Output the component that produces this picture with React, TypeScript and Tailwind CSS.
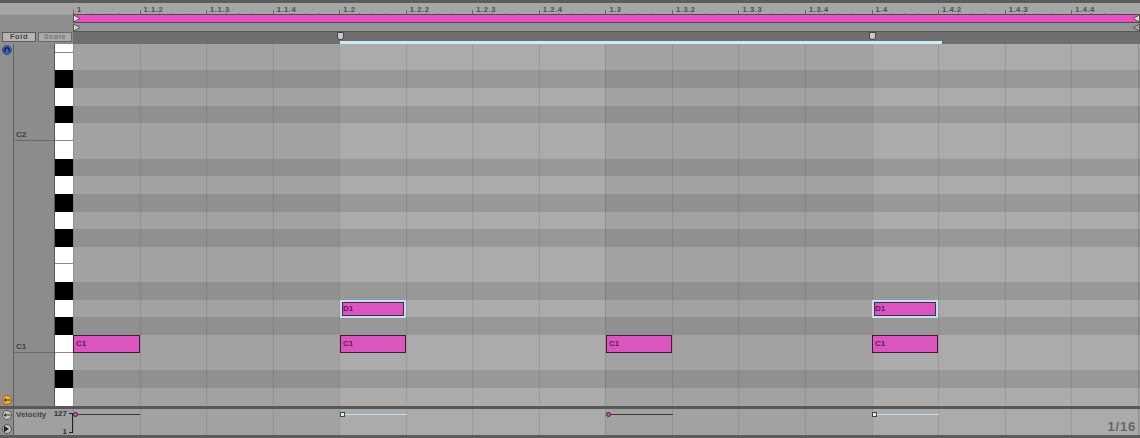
import React from 'react';

// row 0 is the cut off F2 at the top, then downwards to A0
const rows = ['w', 'w', 'b', 'w', 'b', 'w', 'w', 'b', 'w', 'b', 'w', 'b', 'w', 'w', 'b', 'w', 'b', 'w', 'w', 'b', 'w'];
const cols = Array.from({ length: 17 }, (_, i) => i);
const labels = ['1', '1.1.2', '1.1.3', '1.1.4', '1.2', '1.2.2', '1.2.3', '1.2.4', '1.3', '1.3.2', '1.3.3', '1.3.4', '1.4', '1.4.2', '1.4.3', '1.4.4'];

const notes = [
  { name: 'C1', left: 0, top: 291, w: 67, sel: false },
  { name: 'D1', left: 267, top: 256, w: 66, sel: true },
  { name: 'C1', left: 267, top: 291, w: 66, sel: false },
  { name: 'C1', left: 533, top: 291, w: 66, sel: false },
  { name: 'D1', left: 799, top: 256, w: 66, sel: true },
  { name: 'C1', left: 799, top: 291, w: 66, sel: false },
];

const velocity = [
  { left: 0, sel: false },
  { left: 267, sel: true },
  { left: 533, sel: false },
  { left: 799, sel: true },
];

const Note = ({ name, left, top, w, sel }: { name: string; left: number; top: number; w: number; sel: boolean }) => (
  <div
    className={`absolute h-[18px] flex items-center bg-[#db55be] text-[8px] font-bold text-[#5c1c50] ${sel ? 'pl-[1px] border-2 border-[#c3e2ef] outline outline-1 -outline-offset-3 outline-[#4a2a48]' : 'pl-[2px] border border-[#3a1c36]'}`}
    style={{ left, top, width: w }}
  >
    {name}
  </div>
);

const GridLines = () => (
  <div className="absolute inset-0 grid grid-cols-[repeat(17,66.56px)] overflow-hidden pointer-events-none">
    {cols.map(i => (
      <div
        key={i}
        className={`border-l border-black/10 ${Math.floor(i / 4) % 2 === 0 ? 'bg-black/5' : ''}`}
      />
    ))}
  </div>
);

export default function App() {
  return (
    <div className="w-[1140px] h-[438px] flex flex-col overflow-hidden bg-[#8c8c8c] text-[#3c3c3c]" style={{ fontFamily: '"Liberation Sans", Arial, sans-serif' }}>
      <div className="h-[3px] bg-[#5c5c5c] shrink-0" />

      {/* header: ruler, clip bar, loop bar */}
      <div className="h-[41px] flex shrink-0">
        <div className="w-[73px] shrink-0 flex flex-col bg-[#8d8d8d]">
          <div className="h-[12px] bg-[#a6a6a6]" />
          <div className="flex gap-[2px] pl-[2px] pt-[17px]">
            <div className="w-[34px] h-[10px] border border-[#5a5a5a] bg-[#b5b5b5] text-[7.5px] font-bold leading-[8px] text-center tracking-[0.6px] text-[#444]">Fold</div>
            <div className="w-[34px] h-[10px] border border-[#6a6a6a] bg-[#ababab] text-[7.5px] font-bold leading-[8px] text-center tracking-[0.6px] text-[#777]">Scale</div>
          </div>
        </div>
        <div className="flex-1 flex flex-col relative">
          <div className="h-[11px] bg-[#a6a6a6] grid grid-cols-[repeat(16,66.56px)]">
            {labels.map(l => (
              <div key={l} className="relative flex justify-around items-end">
                <div className="absolute left-0 bottom-0 h-[4px] w-[1px] bg-[#666]" />
                <span className="absolute left-[4px] top-[2px] text-[7.5px] leading-[9px] font-bold tracking-[0.6px] text-[#4a4a4a]">{l}</span>
                <div className="w-[1px]" />
                <div className="w-[1px] h-[1px] bg-[#777]" />
                <div className="w-[1px] h-[1px] bg-[#777]" />
                <div className="w-[1px] h-[1px] bg-[#777]" />
                <div className="w-[1px]" />
              </div>
            ))}
          </div>
          <div className="h-[9px] bg-[#ea4fc6] border-b border-t border-[#4c4c4c]" />
          <div className="h-[9px] bg-[#959595] border-b border-[#565656]" />
          <div className="flex-1 bg-[#6f6f6f] relative">
            <div className="absolute left-[267px] top-[9px] w-[602px] h-[2.5px] bg-[#cfe9f6]" />
            <div className="absolute left-[264px] top-0 w-[7px] h-[8px] bg-[#c9c9c9] border border-[#444] rounded-b-[3px]" />
            <div className="absolute left-[796px] top-0 w-[7px] h-[8px] bg-[#c9c9c9] border border-[#444] rounded-b-[3px]" />
          </div>
          {/* start and end flags */}
          <svg className="absolute left-0 top-[11px]" width="8" height="18" viewBox="0 0 8 18">
            <path d="M0.5 1 L7 4.5 L0.5 8 Z" fill="#dcdcdc" stroke="#555" />
            <path d="M0.5 10 L7 13.5 L0.5 17 Z" fill="#d4d4d4" stroke="#555" />
          </svg>
          <svg className="absolute right-0 top-[11px]" width="8" height="18" viewBox="0 0 8 18">
            <path d="M7.5 1 L1 4.5 L7.5 8 Z" fill="#dcdcdc" stroke="#555" />
            <path d="M7.5 10 L1 13.5 L7.5 17 Z" fill="#a8a8a8" stroke="#555" />
          </svg>
        </div>
      </div>

      {/* note editor */}
      <div className="h-[362px] flex shrink-0">
        <div className="w-[14px] shrink-0 flex flex-col justify-between items-center bg-[#8f8f8f] border-r border-[#5f5f5f] pt-[1px] pb-[1px]">
          <div className="w-[10px] h-[10px] rounded-full bg-[#3d63c6] border border-[#3a4a7c] flex items-center justify-center">
            <svg width="6" height="6" viewBox="0 0 6 6"><path d="M0.8 5 V3 A2.2 2.2 0 0 1 5.2 3 V5" fill="none" stroke="#16224e" strokeWidth="1.4" /></svg>
          </div>
          <div className="w-[10px] h-[10px] rounded-full bg-[#f2b032] border border-[#8f6a1d] flex items-center justify-center">
            <svg width="8" height="6" viewBox="0 0 8 6"><path d="M0.5 3 L3 1 V2.5 H7.5 V3.5 H3 V5 Z" fill="#4a3510" /></svg>
          </div>
        </div>
        <div className="w-[41px] shrink-0 relative bg-[#8c8c8c] border-r border-[#555]">
          <div className="absolute left-0 right-0 top-[96px] border-b border-[#6a6a6a] h-[1px]" />
          <div className="absolute left-0 right-0 top-[308px] border-b border-[#6a6a6a] h-[1px]" />
          <span className="absolute left-[2px] top-[86px] text-[8px] leading-[10px] font-bold text-[#3f3f3f]">C2</span>
          <span className="absolute left-[2px] top-[298px] text-[8px] leading-[10px] font-bold text-[#3f3f3f]">C1</span>
        </div>
        <div className="w-[18px] shrink-0 grid grid-rows-[8.6px_repeat(20,17.67px)]">
          {rows.map((r, i) => (
            <div key={i} className={r === 'b' ? 'bg-black' : `bg-white ${rows[i + 1] === 'w' ? 'border-b border-[#8a8a8a]' : ''}`} />
          ))}
        </div>
        <div className="flex-1 relative overflow-hidden">
          <div className="grid grid-rows-[8.6px_repeat(20,17.67px)] h-full">
            {rows.map((r, i) => (
              <div key={i} className={r === 'b' ? 'bg-[#989898]' : 'bg-[#ababab]'} />
            ))}
          </div>
          <GridLines />
          {notes.map((n, i) => <Note key={i} {...n} />)}
        </div>
      </div>

      <div className="h-[3px] bg-[#585858] shrink-0" />

      {/* velocity lane */}
      <div className="flex-1 flex min-h-0">
        <div className="w-[14px] shrink-0 flex flex-col justify-between items-center bg-[#8f8f8f] border-r border-[#5f5f5f] py-[1px]">
          <div className="w-[10px] h-[10px] rounded-full bg-[#c4c4c4] border border-[#555] flex items-center justify-center">
            <svg width="8" height="6" viewBox="0 0 8 6"><path d="M0.5 3 L3 1 V2.5 H7.5 V3.5 H3 V5 Z" fill="#333" /></svg>
          </div>
          <div className="w-[10px] h-[10px] rounded-full bg-[#bdbdbd] border border-[#555] flex items-center justify-center">
            <svg width="5" height="6" viewBox="0 0 5 6"><path d="M0 0 L5 3 L0 6 Z" fill="#1c1c1c" /></svg>
          </div>
        </div>
        <div className="w-[59px] shrink-0 relative bg-[#a0a0a0]">
          <span className="absolute left-[2px] top-[1px] text-[8px] leading-[10px] font-bold text-[#444]">Velocity</span>
          <span className="absolute right-[6px] top-0 text-[8px] leading-[10px] font-bold text-[#333]">127</span>
          <span className="absolute right-[6px] bottom-[-2px] text-[8px] leading-[10px] font-bold text-[#333]">1</span>
          <div className="absolute right-0 top-[4px] bottom-[2px] w-[4px] border-r border-t border-b border-[#222]" />
        </div>
        <div className="flex-1 relative bg-[#ababab] overflow-hidden">
          <GridLines />
          {velocity.map(v => (
            <div key={v.left} className="absolute top-[3px] h-[5px] flex items-center" style={{ left: v.left }}>
              <div className={`w-[5px] h-[5px] shrink-0 ${v.sel ? 'bg-[#d8eef8] border border-[#444]' : 'bg-[#e04cc0] border border-[#3a1c36] rounded-full'}`} />
              <div className={`w-[62px] h-[1px] ${v.sel ? 'bg-[#bfe0ee]' : 'bg-[#3a3a3a]'}`} />
            </div>
          ))}
          <span className="absolute right-[4px] bottom-[1px] text-[13px] leading-[14px] font-bold tracking-[0.8px] text-[#666]">1/16</span>
        </div>
      </div>
      <div className="h-[3px] bg-[#5c5c5c] shrink-0" />
    </div>
  );
}
